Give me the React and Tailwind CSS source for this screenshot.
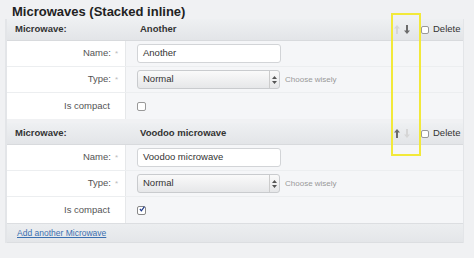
import { useState } from 'react'

function Arrow({ up, active }) {
  return (
    <svg width="6" height="9" viewBox="0 0 6 9" className={active ? 'text-[#6b6b6b]' : 'text-[#d6d6d6]'}>
      {up ? (
        <path d="M3 0 L6 3.5 L4 3.5 L4 9 L2 9 L2 3.5 L0 3.5 Z" fill="currentColor" />
      ) : (
        <path d="M3 9 L6 5.5 L4 5.5 L4 0 L2 0 L2 5.5 L0 5.5 Z" fill="currentColor" />
      )}
    </svg>
  )
}

function Header({ title, upActive, downActive }) {
  return (
    <div className="flex items-center h-[22px] bg-gradient-to-b from-[#eef0f2] to-[#e3e5e8] border-b border-[#d8dadd] text-[9.5px] font-bold text-[#333]">
      <div className="w-[125px] pl-2">Microwave:</div>
      <div className="flex-1 pl-[8px]">{title}</div>
      <div className="flex items-center gap-[4px] w-[26px] pl-[6px]">
        <Arrow up active={upActive} />
        <Arrow active={downActive} />
      </div>
      <div className="flex items-center gap-[4px] w-[42px] ml-[7px] font-normal">
        <span className="w-[8px] h-[8px] border border-[#999] rounded-[2px] bg-white" />
        <span>Delete</span>
      </div>
    </div>
  )
}

function Row({ label, req, children, last }) {
  return (
    <div className={`flex h-[26px] ${last ? '' : 'border-b border-[#eceef0]'}`}>
      <div className="w-[118px] bg-white flex items-center justify-end pr-[7px] text-[9.5px] text-[#555]">
        {label}
        {req ? <span className="text-[#bbb] ml-[4px] text-[8px]">*</span> : <span className="ml-[4px] w-[4px]" />}
      </div>
      <div className="flex-1 flex items-center pl-[11px] bg-[#f5f6f8] border-l border-[#e6e8ea]">{children}</div>
    </div>
  )
}

function Select() {
  return (
    <>
      <div className="flex w-[143px] h-[19px] rounded-[3px] border border-[#c9cbce] bg-gradient-to-b from-[#fafafa] to-[#e6e7e9] text-[9.5px] text-[#333]">
        <div className="flex-1 flex items-center pl-[5px]">Normal</div>
        <div className="w-[10px] border-l border-[#ccc] flex items-center justify-center">
          <svg width="5" height="8" viewBox="0 0 5 8">
            <path d="M2.5 0 L5 3 L0 3 Z M2.5 8 L5 5 L0 5 Z" fill="#555" />
          </svg>
        </div>
      </div>
      <span className="ml-[5px] text-[8px] text-[#999]">Choose wisely</span>
    </>
  )
}

function Block({ title, checked, upActive, downActive }) {
  return (
    <div>
      <Header title={title} upActive={upActive} downActive={downActive} />
      <Row label="Name:" req>
        <div className="w-[144px] h-[19px] rounded-[3px] border border-[#d2d4d7] bg-white flex items-center pl-[5px] text-[9.5px] text-[#333]">
          {title}
        </div>
      </Row>
      <Row label="Type:" req>
        <Select />
      </Row>
      <Row label="Is compact" last>
        {checked ? (
          <span className="w-[9px] h-[9px] border border-[#888] rounded-[2px] bg-white flex items-center justify-center">
            <svg width="10" height="10" viewBox="0 0 10 10" className="-mt-[2px] ml-[1px]">
              <path d="M1.5 5 L4 8 L9 1" stroke="#1e3a8a" strokeWidth="2" fill="none" />
            </svg>
          </span>
        ) : (
          <span className="w-[9px] h-[9px] border border-[#999] rounded-[2px] bg-white" />
        )}
      </Row>
    </div>
  )
}

export default function App() {
  const [items] = useState([
    { title: 'Another', checked: false, up: false, down: true },
    { title: 'Voodoo microwave', checked: true, up: true, down: false },
  ])

  return (
    <div className="relative w-[474px] h-[258px] bg-[#f0f1f3] font-['Liberation_Sans',Arial,sans-serif] overflow-hidden">
      <div className="pl-[12px] pt-[4px] h-[19px] text-[13px] font-bold text-[#222] leading-[15px]">
        Microwaves (Stacked inline)
      </div>
      <div className="ml-[5px] w-[459px] border-l-2 border-r border-[#e3e5e8] flex flex-col gap-[4px]">
        <Block {...items[0]} upActive={items[0].up} downActive={items[0].down} />
        <div>
          <Block {...items[1]} upActive={items[1].up} downActive={items[1].down} />
          <div className="h-[20px] flex items-center pl-[10px] bg-gradient-to-b from-[#eceef0] to-[#e4e6e9] border-t border-[#dcdee1] border-b">
            <span className="text-[8.5px] text-[#3a6fb0] underline">Add another Microwave</span>
          </div>
        </div>
      </div>
      <div className="absolute left-[391px] top-[13px] w-[30px] h-[143px] border-2 border-[#f2e93a] pointer-events-none" />
    </div>
  )
}
